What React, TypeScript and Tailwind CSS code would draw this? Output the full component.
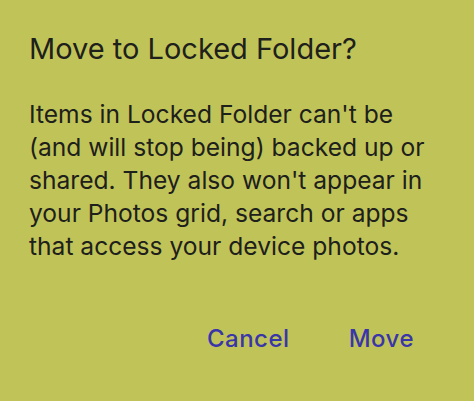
export default function App() {
  return (
    <div
      className="w-[474px] h-[401px] bg-[#c0c458] text-[#1e201b] overflow-hidden"
      style={{ fontFamily: 'Inter, "Noto Sans", sans-serif' }}
    >
      <div className="pl-[29px] pr-[16px] pt-[31px]">
        <h1 className="text-[29px] leading-[36px] font-normal">Move to Locked Folder?</h1>
        <p className="mt-[31px] text-[24.6px] leading-[33px]">
          Items in Locked Folder can't be
          <br />
          (and will stop being) backed up or
          <br />
          shared. They also won't appear in
          <br />
          your Photos grid, search or apps
          <br />
          that access your device photos.
        </p>
      </div>
      <div className="flex justify-end gap-[59px] pr-[60px] mt-[61px] text-[24px] leading-[30px] tracking-[0.5px] text-[#3a36a8] font-medium">
        <button>Cancel</button>
        <button>Move</button>
      </div>
    </div>
  );
}
